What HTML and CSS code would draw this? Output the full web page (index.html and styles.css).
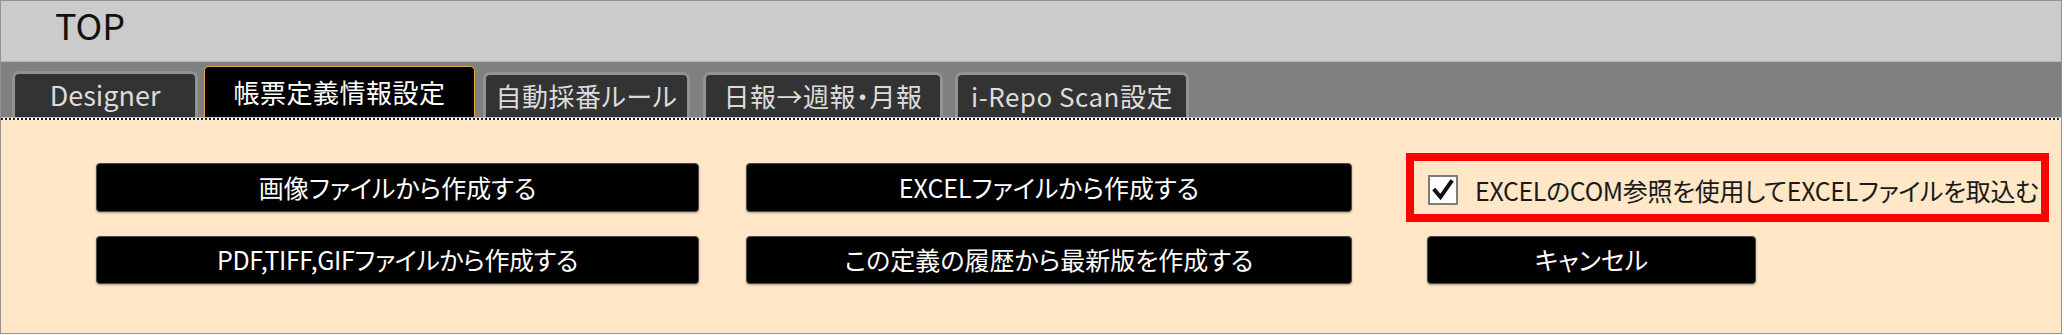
FILE: index.html
```html
<!DOCTYPE html>
<html lang="ja">
<head>
<meta charset="utf-8">
<title>TOP</title>
<link rel="stylesheet" href="styles.css">
</head>
<body>
<div class="window">
  <div class="titlebar">TOP</div>
  <div class="tabstrip">
    <div class="tab tab-designer">Designer</div>
    <div class="tab tab-active">帳票定義情報設定</div>
    <div class="tab tab-auto">自動採番ルール</div>
    <div class="tab tab-report">日報→週報・月報</div>
    <div class="tab tab-scan">i-Repo Scan設定</div>
  </div>
  <div class="divider"></div>
  <div class="content">
    <div class="grid">
      <button class="btn">画像ファイルから作成する</button>
      <button class="btn">EXCELファイルから作成する</button>
      <div class="annot">
        <label class="chk">
          <span class="box"><svg viewBox="0 0 26 26" width="26" height="26"><path d="M5 13.5 L10.5 20 L21 5" fill="none" stroke="#111" stroke-width="4" stroke-linecap="square" stroke-linejoin="miter"/></svg></span>
          <span class="chk-label">EXCELのCOM参照を使用してEXCELファイルを取込む</span>
        </label>
      </div>
      <button class="btn btn-tight">PDF,TIFF,GIFファイルから作成する</button>
      <button class="btn">この定義の履歴から最新版を作成する</button>
      <button class="btn btn-cancel">キャンセル</button>
    </div>
  </div>
</div>
</body>
</html>
```
FILE: styles.css
```css
* { box-sizing: border-box; }
html, body { margin: 0; padding: 0; background: #ffffff; }
body {
  font-family: "Noto Sans CJK JP", "Noto Sans", sans-serif;
  font-feature-settings: "palt";
}
.window {
  width: 2062px;
  height: 334px;
  border: 1px solid #929292;
  display: flex;
  flex-direction: column;
  background: #ffe7c7;
}
.titlebar {
  height: 61px;
  background: #cbcbcb;
  border-bottom: 1px solid #b5b5b5;
  padding-left: 54px;
  font-size: 36px;
  line-height: 46px;
  color: #111;
}
.tabstrip {
  height: 55px;
  background: #808080;
  display: flex;
  align-items: flex-end;
  padding-left: 11px;
}
.tab {
  height: 46px;
  background: #333333;
  border: 3px solid #939393;
  border-bottom: none;
  border-radius: 7px 7px 0 0;
  color: #dcdcdc;
  font-size: 26px;
  letter-spacing: 0.5px;
  display: flex;
  align-items: center;
  justify-content: center;
  padding-bottom: 2px;
  white-space: nowrap;
}
.tab-designer { width: 186px; font-size: 27px; letter-spacing: 0; }
.tab-active {
  width: 271px;
  height: 51px;
  margin-left: 6px;
  background: #000;
  border: 1px solid #e1a53a;
  border-bottom: none;
  border-radius: 5px 5px 0 0;
  color: #fff;
}
.tab-auto { width: 207px; margin-left: 8px; height: 45px; }
.tab-report { width: 240px; margin-left: 13px; height: 45px; }
.tab-scan { width: 234px; margin-left: 12px; height: 45px; }
.divider {
  height: 3px;
  border-top: 1px solid #b9c3cb;
  background: repeating-linear-gradient(90deg, #1c1c1c 0 2px, #ffffff 2px 4px);
}
.content {
  flex: 1;
  background: #ffe7c7;
  padding: 43px 0 0 95px;
}
.grid {
  display: grid;
  grid-template-columns: 603px 606px 357px;
  grid-template-rows: 49px 48px;
  column-gap: 47px;
  row-gap: 24px;
}
.btn {
  background: #000;
  color: #fff;
  border: 1px solid #4a4a4a;
  border-radius: 4px;
  box-shadow: 0 1px 2px rgba(0,0,0,0.35);
  font-family: inherit;
  font-feature-settings: "palt";
  font-size: 25px;
  padding: 0 0 2px;
  margin: 0;
  cursor: pointer;
}
.btn-tight { letter-spacing: -0.4px; }
.btn-cancel { margin-left: 28px; }
.annot {
  margin: -10px 0 -10px 7px;
  width: 643px;
  border: 8px solid #ff0000;
  display: flex;
  align-items: center;
  padding: 4px 0 0 14px;
}
.chk {
  display: flex;
  align-items: center;
  white-space: nowrap;
}
.box {
  width: 30px;
  height: 30px;
  border: 2px solid #7c7c7c;
  background: #fff;
  display: flex;
  align-items: center;
  justify-content: center;
  margin-right: 17px;
}
.chk-label {
  font-size: 25px;
  letter-spacing: -0.35px;
  color: #1a1a1a;
}
```
